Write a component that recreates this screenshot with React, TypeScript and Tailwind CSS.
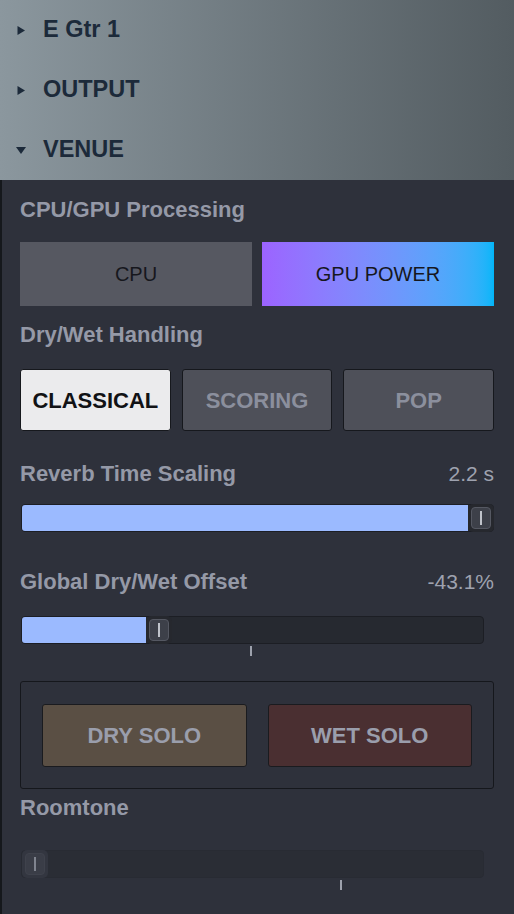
import React from 'react'

const font = { fontFamily: '"Liberation Sans", Arial, sans-serif' }

const HeaderRow = ({ label, open }: { label: string; open?: boolean }) => (
  <div className="flex h-[60px] items-center">
    <div className="flex w-[43px] justify-center pr-[1px]">
      {open ? (
        <svg width="12" height="9" viewBox="0 0 12 9">
          <path d="M1 1 L11 1 L6 8 Z" fill="#1c2a3a" />
        </svg>
      ) : (
        <svg width="10" height="11" viewBox="0 0 10 11">
          <path d="M1.5 1 L9 5.5 L1.5 10 Z" fill="#1c2a3a" />
        </svg>
      )}
    </div>
    <span className="text-[23.5px] font-bold text-[#1c2a3a]">{label}</span>
  </div>
)

const Thumb = ({ dim }: { dim?: boolean }) => (
  <div
    className={`flex h-[28px] w-[26px] shrink-0 items-center justify-center rounded-[5px] ${
      dim ? 'bg-[#333640]' : 'bg-[#26282e]'
    }`}
  >
    <div
      className={`flex h-[22px] w-[20px] items-center justify-center rounded-[4px] border ${
        dim ? 'border-[#3f424c] bg-[#3a3d47]' : 'border-[#555862] bg-[#3d4049]'
      }`}
    >
      <div className={`h-[14px] w-[2px] ${dim ? 'bg-[#80848f]' : 'bg-[#c0c3ca]'}`} />
    </div>
  </div>
)

const Slider = ({
  value,
  width,
  tick,
  dim,
}: {
  value: number
  width: number
  tick?: number
  dim?: boolean
}) => (
  <div style={{ width }}>
    <div
      className={`relative flex h-[28px] items-center rounded-[4px] border ${
        dim ? 'border-[#282b33] bg-[#2a2d35]' : 'border-[#1c1e24] bg-[#262930]'
      }`}
    >
      <div
        className="h-full shrink-0 rounded-l-[3px] bg-[#9bbaff]"
        style={{ width: `${value}px` }}
      />
      <Thumb dim={dim} />
    </div>
    {tick !== undefined && (
      <div className="relative h-[13px]">
        <div
          className="absolute top-[2px] h-[10px] w-[2px] bg-[#9da1ac]"
          style={{ left: tick }}
        />
      </div>
    )}
  </div>
)

const Label = ({ children, value }: { children: React.ReactNode; value?: string }) => (
  <div className="flex items-center justify-between leading-[26px]">
    <span className="text-[22px] font-bold text-[#9599a7]">{children}</span>
    {value && <span className="text-[21px] text-[#9ea2af]">{value}</span>}
  </div>
)

export default function App() {
  return (
    <div className="h-[914px] w-[514px] overflow-hidden bg-[#2e313b]" style={font}>
      <div className="bg-gradient-to-r from-[#8b979e] to-[#535c61]">
        <HeaderRow label="E Gtr 1" />
        <HeaderRow label="OUTPUT" />
        <HeaderRow label="VENUE" open />
      </div>

      <div className="flex h-[734px]">
        <div className="w-[2px] bg-[#15181c]" />
        <div className="flex-1 pl-[18px] pr-[20px] pt-[17px]">
          <Label>CPU/GPU Processing</Label>

          <div className="mt-[19px] flex gap-[10px]">
            <div className="flex h-[64px] flex-1 items-center justify-center bg-[#565861] text-[20px] text-[#16171d]">
              CPU
            </div>
            <div className="flex h-[64px] flex-1 items-center justify-center bg-gradient-to-r from-[#9c63ff] to-[#00b6f9] text-[20px] text-[#16171d]">
              GPU POWER
            </div>
          </div>

          <div className="mt-[16px]">
            <Label>Dry/Wet Handling</Label>
          </div>

          <div className="mt-[21px] flex gap-[11px]">
            <div className="flex h-[62px] flex-1 items-center justify-center rounded-[3px] border border-[#16181d] bg-[#ebebed] text-[22px] font-bold text-[#111215]">
              CLASSICAL
            </div>
            <div className="flex h-[62px] flex-1 items-center justify-center rounded-[3px] border border-[#16181d] bg-[#4e5059] text-[22px] font-bold text-[#8b8f9d]">
              SCORING
            </div>
            <div className="flex h-[62px] flex-1 items-center justify-center rounded-[3px] border border-[#16181d] bg-[#4e5059] text-[22px] font-bold text-[#8b8f9d]">
              POP
            </div>
          </div>

          <div className="mt-[30px]">
            <Label value="2.2 s">Reverb Time Scaling</Label>
          </div>
          <div className="mt-[17px] pl-[1px]">
            <Slider value={446} width={473} />
          </div>

          <div className="mt-[37px]">
            <Label value="-43.1%">Global Dry/Wet Offset</Label>
          </div>
          <div className="mt-[21px] pl-[1px]">
            <Slider value={124} width={463} tick={229} />
          </div>

          <div className="mt-[24px] flex h-[108px] items-center gap-[21px] rounded-[3px] border border-[#15171c] px-[21px]">
            <div className="flex h-[63px] flex-1 items-center justify-center rounded-[3px] border border-[#1a1b1f] bg-[#5a4f44] text-[22px] font-bold text-[#9a9eac]">
              DRY SOLO
            </div>
            <div className="flex h-[63px] flex-1 items-center justify-center rounded-[3px] border border-[#1a1b1f] bg-[#4a2f31] text-[22px] font-bold text-[#9a9eac]">
              WET SOLO
            </div>
          </div>

          <div className="mt-[6px]">
            <Label>Roomtone</Label>
          </div>
          <div className="mt-[29px] pl-[1px]">
            <Slider value={0} width={463} tick={319} dim />
          </div>
        </div>
      </div>
    </div>
  )
}
